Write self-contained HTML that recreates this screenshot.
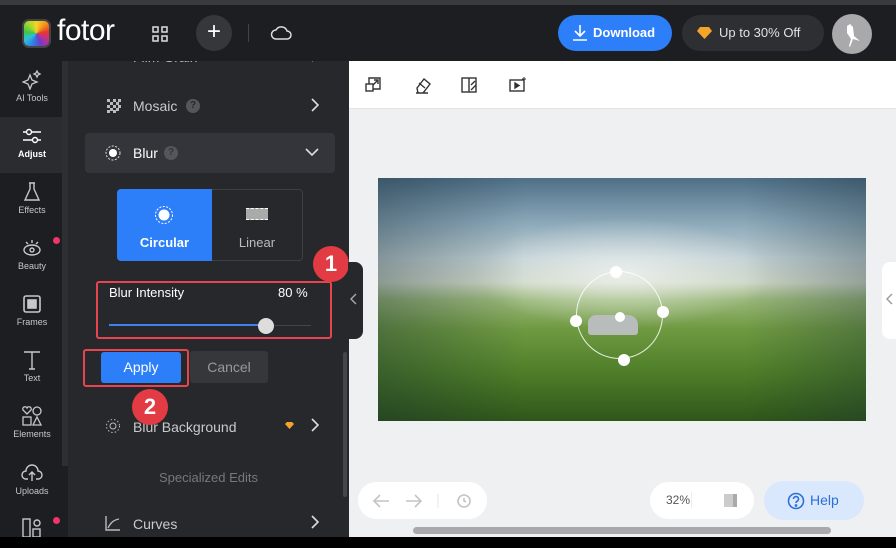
<!DOCTYPE html>
<html><head><meta charset="utf-8"><style>
*{margin:0;padding:0;box-sizing:border-box}
body{width:896px;height:548px;overflow:hidden;background:#1d1e22;font-family:"Liberation Sans",sans-serif;position:relative}
.a{position:absolute}
.rail .it{position:absolute;left:0;width:64px;text-align:center;color:#c8c8cc;font-size:9px}
.rail svg{display:block;margin:0 auto 3px}
.row{position:absolute;left:85px;width:250px;height:40px;color:#c9cacd;font-size:14px}
.ch{position:absolute;right:16px;top:12px}
</style></head><body>
<!-- panel -->
<div class="a" style="left:68px;top:61px;width:281px;height:476px;background:#27282c"></div>
<div class="a" style="left:343px;top:352px;width:4px;height:145px;background:#45464a;border-radius:2px"></div>
<div class="row" style="top:46px"><svg class="a" style="left:22px;top:7px" width="14" height="6" fill="#999"><rect x="0" y="0" width="2" height="2"/><rect x="4" y="0" width="2" height="2"/><rect x="8" y="0" width="2" height="2"/><rect x="12" y="0" width="2" height="2"/><rect x="0" y="4" width="2" height="2"/><rect x="4" y="4" width="2" height="2"/><rect x="8" y="4" width="2" height="2"/><rect x="12" y="4" width="2" height="2"/></svg><div class="a" style="left:48px;top:3px;color:#bbb">Film Grain</div><svg class="ch" style="top:2px" width="8" height="14" fill="none" stroke="#ddd" stroke-width="1.6"><path d="M1 1l6 6-6 6"/></svg></div>
<!-- header -->
<div class="a" style="left:0;top:0;width:896px;height:61px;background:#1d1e22"></div>
<div class="a" style="left:0;top:0;width:896px;height:5px;background:#3a3b3e"></div>
<div class="a" style="left:22px;top:19px;width:29px;height:29px;border-radius:7px;background:conic-gradient(#f5d32a,#f39a1a,#e8392e,#c0308f,#6a3fc7,#2f7ee8,#2fc0d8,#3fc64a,#a7d72b,#f5d32a);border:2px solid #444"></div>
<div class="a" style="left:57px;top:14px;color:#fff;font-size:30px;letter-spacing:-0.5px">fotor</div>
<svg class="a" style="left:152px;top:26px" width="16" height="16" fill="none" stroke="#ddd" stroke-width="1.5"><rect x="1" y="1" width="5" height="5"/><rect x="10" y="1" width="5" height="5"/><rect x="1" y="10" width="5" height="5"/><rect x="10" y="10" width="5" height="5"/></svg>
<div class="a" style="left:196px;top:15px;width:36px;height:36px;border-radius:50%;background:#36373b;color:#fff;font-size:24px;text-align:center;line-height:34px">+</div>
<div class="a" style="left:248px;top:24px;width:1px;height:18px;background:#444"></div>
<svg class="a" style="left:270px;top:24px" width="22" height="18" fill="none" stroke="#ddd" stroke-width="1.5"><path d="M6 15h11a4 4 0 0 0 0-8 6 6 0 0 0-11-1 4.5 4.5 0 0 0 0 9z"/></svg>
<div class="a" style="left:558px;top:15px;width:114px;height:36px;border-radius:18px;background:#2d7ff9;color:#fff;font-weight:bold;font-size:13px;line-height:36px;padding-left:35px">Download</div>
<svg class="a" style="left:572px;top:24px" width="16" height="17" fill="none" stroke="#fff" stroke-width="1.6"><path d="M8 1v11M3 7l5 5 5-5M1 16h14"/></svg>
<div class="a" style="left:682px;top:15px;width:142px;height:36px;border-radius:18px;background:#2e2f33;color:#e2e2e4;font-size:13px;line-height:36px;padding-left:37px">Up to 30% Off</div>
<svg class="a" style="left:697px;top:27px" width="15" height="12"><path d="M3 0h9l3 4-7.5 8L0 4z" fill="#f5a42a"/></svg>
<div class="a" style="left:832px;top:14px;width:40px;height:40px;border-radius:50%;background:#a9a9ab"></div>
<svg class="a" style="left:840px;top:20px" width="24" height="28"><path d="M7 6l3-2 3 3 1 9 6 5-7-2-3 8-1-1 2-7-4-6z" fill="#fff"/></svg>
<!-- rail -->
<div class="rail">
<div class="a" style="left:0;top:117px;width:64px;height:56px;background:#2b2c30"></div>
<div class="a" style="left:62px;top:61px;width:6px;height:405px;background:#2e2f33"></div>
<div class="it" style="top:70px"><svg width="20" height="20" fill="none" stroke="#c8c8cc" stroke-width="1.3"><path d="M8 5l2 5 5 2-5 2-2 5-2-5-5-2 5-2z"/><path d="M15 1l1 2 2 1-2 1-1 2-1-2-2-1 2-1z"/></svg>AI Tools</div>
<div class="it" style="top:126px;color:#fff;font-weight:bold"><svg width="20" height="20" fill="none" stroke="#fff" stroke-width="1.4"><path d="M1 6h18M1 14h18"/><circle cx="7" cy="6" r="2.5" fill="#2b2c30"/><circle cx="13" cy="14" r="2.5" fill="#2b2c30"/></svg>Adjust</div>
<div class="it" style="top:182px"><svg width="20" height="20" fill="none" stroke="#c8c8cc" stroke-width="1.4"><path d="M7 1h6M8 1v6l-5 11h14L12 7V1"/></svg>Effects</div>
<div class="it" style="top:238px"><svg width="20" height="20" fill="none" stroke="#c8c8cc" stroke-width="1.4"><ellipse cx="10" cy="12" rx="8" ry="5"/><circle cx="10" cy="12" r="2"/><path d="M10 2v3M4 4l2 2M16 4l-2 2"/></svg>Beauty</div>
<div class="a" style="left:53px;top:237px;width:7px;height:7px;border-radius:50%;background:#f0356b"></div>
<div class="it" style="top:294px"><svg width="20" height="20" fill="none" stroke="#c8c8cc" stroke-width="1.6"><rect x="2" y="2" width="16" height="16" rx="2"/><rect x="6" y="6" width="8" height="8" fill="#c8c8cc"/></svg>Frames</div>
<div class="it" style="top:350px"><svg width="20" height="20" fill="none" stroke="#c8c8cc" stroke-width="1.4"><path d="M2 2h16M10 2v17M7 19h6"/></svg>Text</div>
<div class="it" style="top:406px"><svg width="20" height="20" fill="none" stroke="#c8c8cc" stroke-width="1.3"><path d="M5 8L1 4a2 2 0 0 1 4-2 2 2 0 0 1 4 2z"/><circle cx="15" cy="5" r="4"/><rect x="1" y="11" width="8" height="8"/><path d="M15 11l4 8h-8z"/></svg>Elements</div>
<div class="it" style="top:463px"><svg width="22" height="20" fill="none" stroke="#c8c8cc" stroke-width="1.4"><path d="M7 16H5a4 4 0 0 1 0-8 6 6 0 0 1 12 0 4 4 0 0 1 0 8h-2M11 18v-9M8 12l3-3 3 3"/></svg>Uploads</div>
<div class="it" style="top:518px"><svg width="20" height="20" fill="none" stroke="#c8c8cc" stroke-width="1.4"><rect x="1" y="1" width="7" height="18"/><circle cx="15" cy="5" r="3"/><rect x="11" y="11" width="7" height="8"/></svg></div>
<div class="a" style="left:53px;top:517px;width:7px;height:7px;border-radius:50%;background:#f0356b"></div>
</div>
<div class="row" style="top:86px"><svg class="a" style="left:22px;top:13px" width="14" height="14"><g fill="#bbb"><rect x="0" y="0" width="3" height="3"/><rect x="6" y="0" width="3" height="3"/><rect x="3" y="3" width="3" height="3"/><rect x="9" y="3" width="3" height="3"/><rect x="0" y="6" width="3" height="3"/><rect x="6" y="6" width="3" height="3"/><rect x="3" y="9" width="3" height="3"/><rect x="9" y="9" width="3" height="3"/><rect x="11" y="0" width="3" height="3"/><rect x="0" y="11" width="3" height="3"/><rect x="6" y="11" width="3" height="3"/><rect x="11" y="6" width="3" height="3"/></g></svg><div class="a" style="left:48px;top:12px">Mosaic</div><div class="a" style="left:101px;top:13px;width:14px;height:14px;border-radius:50%;background:#55565b;color:#27282c;font-size:10px;font-weight:bold;text-align:center;line-height:14px">?</div><svg class="ch" width="8" height="14" fill="none" stroke="#ddd" stroke-width="1.6"><path d="M1 1l6 6-6 6"/></svg></div>
<div class="row" style="top:133px;background:#34353a;border-radius:4px"><svg class="a" style="left:20px;top:12px" width="16" height="16"><circle cx="8" cy="8" r="7" fill="none" stroke="#ddd" stroke-dasharray="2 1.5"/><circle cx="8" cy="8" r="4" fill="#fff"/></svg><div class="a" style="left:48px;top:12px;color:#fff">Blur</div><div class="a" style="left:79px;top:13px;width:14px;height:14px;border-radius:50%;background:#55565b;color:#34353a;font-size:10px;font-weight:bold;text-align:center;line-height:14px">?</div><svg class="ch" style="top:15px" width="14" height="8" fill="none" stroke="#ddd" stroke-width="1.6"><path d="M1 1l6 6 6-6"/></svg></div>
<!-- circular/linear -->
<div class="a" style="left:117px;top:189px;width:186px;height:72px;border:1px solid #3e3f44;border-radius:4px;background:#27282c"></div>
<div class="a" style="left:117px;top:189px;width:95px;height:72px;background:#2d7ff9;border-radius:4px 0 0 4px;color:#fff;font-weight:bold;font-size:13px;text-align:center;padding-top:46px">Circular</div>
<svg class="a" style="left:154px;top:205px" width="20" height="20"><circle cx="10" cy="10" r="8.5" fill="none" stroke="#fff" stroke-dasharray="2 1.5"/><circle cx="10" cy="10" r="5.5" fill="#fff"/></svg>
<div class="a" style="left:212px;top:235px;width:90px;text-align:center;color:#bbb;font-size:13px">Linear</div>
<div class="a" style="left:246px;top:208px;width:22px;height:12px;background:#aaa;border-top:1px dashed #fff;border-bottom:1px dashed #fff"></div>
<!-- slider -->
<div class="a" style="left:96px;top:281px;width:236px;height:58px;border:2px solid #e64550;border-radius:3px"></div>
<div class="a" style="left:109px;top:285px;color:#fff;font-size:13px">Blur Intensity</div>
<div class="a" style="left:278px;top:285px;color:#fff;font-size:13px">80 %</div>
<div class="a" style="left:109px;top:325px;width:202px;height:1px;background:#444"></div>
<div class="a" style="left:109px;top:324px;width:158px;height:2px;background:#3d82f0"></div>
<div class="a" style="left:258px;top:318px;width:16px;height:16px;border-radius:50%;background:#ddd"></div>
<div class="a" style="left:313px;top:246px;width:36px;height:36px;border-radius:50%;background:#e23b43;color:#fff;font-weight:bold;font-size:22px;text-align:center;line-height:36px">1</div>
<!-- apply -->
<div class="a" style="left:190px;top:351px;width:78px;height:32px;background:#36373b;border-radius:3px;color:#999;font-size:14px;text-align:center;line-height:32px">Cancel</div>
<div class="a" style="left:101px;top:352px;width:80px;height:31px;background:#2d7ff9;border-radius:3px;color:#fff;font-size:14px;text-align:center;line-height:31px">Apply</div>
<div class="a" style="left:83px;top:349px;width:106px;height:38px;border:2px solid #e64550;border-radius:3px"></div>
<div class="row" style="top:406px"><svg class="a" style="left:20px;top:12px" width="16" height="16" fill="none" stroke="#bbb"><circle cx="8" cy="8" r="3"/><circle cx="8" cy="8" r="6.5" stroke-dasharray="1.5 2"/></svg><div class="a" style="left:48px;top:13px">Blur Background</div><svg class="a" style="left:200px;top:16px" width="9" height="7"><path d="M2 0h5l2 2-4.5 5L0 2z" fill="#f5a42a"/></svg><svg class="ch" width="8" height="14" fill="none" stroke="#ddd" stroke-width="1.6"><path d="M1 1l6 6-6 6"/></svg></div>
<div class="a" style="left:132px;top:389px;width:36px;height:36px;border-radius:50%;background:#e23b43;color:#fff;font-weight:bold;font-size:22px;text-align:center;line-height:36px">2</div>
<div class="a" style="left:68px;top:470px;width:281px;text-align:center;color:#77787c;font-size:13px">Specialized Edits</div>
<div class="row" style="top:503px"><svg class="a" style="left:20px;top:12px" width="16" height="16" fill="none" stroke="#bbb" stroke-width="1.4"><path d="M1 1v14h14M3 13c3-6 6-8 11-9"/></svg><div class="a" style="left:48px;top:13px">Curves</div><svg class="ch" width="8" height="14" fill="none" stroke="#ddd" stroke-width="1.6"><path d="M1 1l6 6-6 6"/></svg></div>
<!-- canvas -->
<div class="a" style="left:349px;top:61px;width:547px;height:476px;background:#eff0f2"></div>
<div class="a" style="left:349px;top:61px;width:547px;height:48px;background:#fff;border-bottom:1px solid #e2e3e6"></div>
<svg class="a" style="left:364px;top:76px" width="170" height="18" fill="none" stroke="#333" stroke-width="1.4">
<rect x="2" y="8" width="7" height="7"/><path d="M5 8V2h11v11h-7M9 9l5-5M10 4h4v4"/>
<path d="M53 12l7-9 6 5-7 9h-5zM52 17h12M55 7l6 5"/>
<rect x="98" y="2" width="14" height="14"/><path d="M105 2v14M107 9l4-4M107 14l5-5"/>
<rect x="146" y="4" width="14" height="11"/><path d="M151 7v5l4-2.5z" fill="#333"/><path d="M160 1v4M158 3h4" stroke-width="1"/>
</svg>
<!-- image -->
<div class="a" style="left:378px;top:178px;width:488px;height:243px;overflow:hidden;background:linear-gradient(180deg,#4e6f86 0%,#8aa7b8 18%,#c0cfd2 33%,#cdd6c6 43%,#9ab77a 50%,#6f9a42 62%,#4e7e28 80%,#2f561a 100%)">
<div class="a" style="left:0;top:0;width:488px;height:243px;background:radial-gradient(ellipse 150px 55px at 245px 95px,rgba(255,255,255,.6),rgba(255,255,255,0))"></div>
<div class="a" style="left:0;top:0;width:488px;height:243px;background:linear-gradient(90deg,rgba(20,40,50,.35),rgba(0,0,0,0) 30%,rgba(0,0,0,0) 75%,rgba(20,40,50,.3))"></div>
<div class="a" style="left:210px;top:137px;width:50px;height:20px;background:#b8bdbc;border-radius:8px 10px 3px 3px"></div>
<div class="a" style="left:198px;top:93px;width:87px;height:88px;border:1.5px solid rgba(255,255,255,.85);border-radius:50%"></div>
<div class="a" style="left:232px;top:88px;width:12px;height:12px;border-radius:50%;background:#fff"></div>
<div class="a" style="left:192px;top:137px;width:12px;height:12px;border-radius:50%;background:#fff"></div>
<div class="a" style="left:279px;top:128px;width:12px;height:12px;border-radius:50%;background:#fff"></div>
<div class="a" style="left:240px;top:176px;width:12px;height:12px;border-radius:50%;background:#fff"></div>
<div class="a" style="left:237px;top:134px;width:10px;height:10px;border-radius:50%;background:#fff"></div>
</div>
<!-- side tabs -->
<div class="a" style="left:348px;top:262px;width:15px;height:77px;background:#27282c;border-radius:0 8px 8px 0"></div>
<svg class="a" style="left:350px;top:293px" width="8" height="12" fill="none" stroke="#aaa" stroke-width="1.4"><path d="M6 1L1 6l5 5"/></svg>
<div class="a" style="left:882px;top:262px;width:14px;height:77px;background:#fff;border-radius:8px 0 0 8px"></div>
<svg class="a" style="left:886px;top:293px" width="8" height="12" fill="none" stroke="#999" stroke-width="1.4"><path d="M6 1L1 6l5 5"/></svg>
<!-- bottom -->
<div class="a" style="left:358px;top:482px;width:129px;height:37px;border-radius:19px;background:#fff"></div>
<svg class="a" style="left:372px;top:492px" width="100" height="18" fill="none" stroke="#c4c4c6" stroke-width="1.6"><path d="M17 9H2M8 3L2 9l6 6M34 9h15M43 3l6 6-6 6"/><path d="M66 2v14" stroke="#eee"/><circle cx="92" cy="9" r="6"/><path d="M92 6v3l2 1"/></svg>
<div class="a" style="left:650px;top:482px;width:104px;height:37px;border-radius:19px;background:#fff;color:#555;font-size:12px;line-height:37px;padding-left:16px">32%</div>
<div class="a" style="left:691px;top:492px;width:1px;height:16px;background:#eee"></div>
<div class="a" style="left:724px;top:494px;width:13px;height:13px;background:#ccc;border-right:4px solid #aaa"></div>
<div class="a" style="left:764px;top:481px;width:100px;height:39px;border-radius:20px;background:#d9e8fc;color:#2d6fd8;font-size:14px;line-height:39px;padding-left:46px">Help</div>
<svg class="a" style="left:787px;top:492px" width="18" height="18" fill="none" stroke="#2d6fd8" stroke-width="1.6"><circle cx="9" cy="9" r="7.5"/><path d="M6.5 7a2.5 2.5 0 1 1 3.5 2.3c-.8.4-1 .9-1 1.7"/><circle cx="9" cy="13.5" r=".6" fill="#2d6fd8"/></svg>
<div class="a" style="left:413px;top:527px;width:418px;height:7px;border-radius:4px;background:#a9a9ab"></div>
<div class="a" style="left:0;top:537px;width:896px;height:11px;background:#000"></div>
</body></html>
